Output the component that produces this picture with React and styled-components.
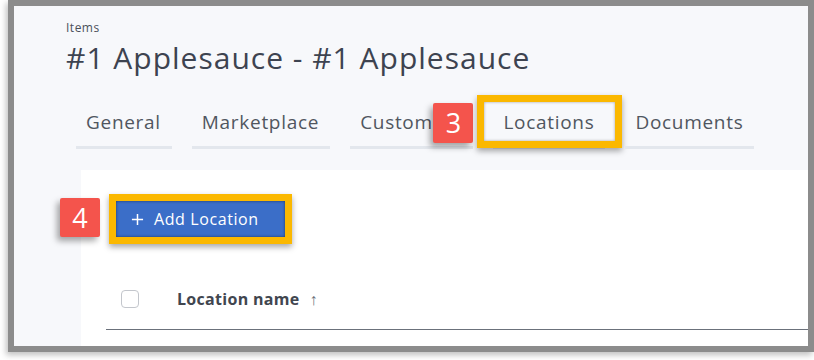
import React from "react";
import styled, {createGlobalStyle} from "styled-components";

const GlobalStyle = createGlobalStyle`
  html, body {
    margin: 0;
    padding: 0;
    background: #ffffff;
  }
  body {
    font-family: "Open Sans", "Liberation Sans", sans-serif;
  }
`;

const tabs = [
  {label: "General"},
  {label: "Marketplace"},
  {label: "Customers", badge: "3"},
  {label: "Locations", highlight: true},
  {label: "Documents"},
];

const App = () => {
  return <Page>
    <GlobalStyle/>
    <Frame>
      <Header>
        <Crumb>Items</Crumb>
        <Title>#1 Applesauce - #1 Applesauce</Title>
      </Header>
      <Tabs>
        {tabs.map(t => (
          <Tab key={t.label}>
            {t.label}
            {t.badge && <TabBadge>{t.badge}</TabBadge>}
            {t.highlight && <TabHighlight/>}
          </Tab>
        ))}
      </Tabs>
      <Card>
        <Toolbar>
          <StepBadge>4</StepBadge>
          <Highlight>
            <AddButton>
              <PlusIcon viewBox="0 0 14 14">
                <path d="M7 1v12M1 7h12" stroke="#fff" strokeWidth="1.6" fill="none"/>
              </PlusIcon>
              Add Location
            </AddButton>
          </Highlight>
        </Toolbar>
        <Table>
          <HeadRow>
            <Checkbox/>
            <HeadCell>Location name</HeadCell>
            <SortArrow>↑</SortArrow>
          </HeadRow>
        </Table>
      </Card>
    </Frame>
  </Page>
};

const Page = styled.div`
  width: 814px;
  height: 360px;
  overflow: hidden;
  background: #ffffff;
`;

const Frame = styled.div`
  margin-left: 8px;
  width: 806px;
  height: 352px;
  box-sizing: border-box;
  border: 6px solid #8c8c8c;
  background: #f7f8fb;
  box-shadow: -2px 3px 6px rgba(0, 0, 0, 0.25);
  overflow: hidden;
  display: flex;
  flex-direction: column;
`;

const Header = styled.div`
  padding: 14px 0 0 52px;
`;

const Crumb = styled.div`
  font-size: 12px;
  line-height: 16px;
  letter-spacing: 0.5px;
  color: #4a505a;
`;

const Title = styled.h1`
  margin: 3px 0 0 0;
  font-size: 30px;
  line-height: 38px;
  font-weight: 500;
  color: #3d4350;
  letter-spacing: 1px;
`;

const Tabs = styled.div`
  display: flex;
  gap: 20px;
  margin: 23px 0 0 62px;
`;

const Tab = styled.div`
  position: relative;
  padding: 9px 11px 11px 10px;
  font-size: 19px;
  line-height: 26px;
  letter-spacing: 0.7px;
  color: #50565f;
  border-bottom: 3px solid #e3e7ed;
  white-space: nowrap;
`;

const TabBadge = styled.div`
  position: absolute;
  right: 0;
  top: 3px;
  width: 40px;
  height: 40px;
  border-radius: 2px;
  background: #f4544c;
  color: #ffffff;
  font-size: 27px;
  line-height: 40px;
  letter-spacing: 0;
  text-align: center;
  box-shadow: -3px 4px 6px rgba(0, 0, 0, 0.35);
`;

const TabHighlight = styled.div`
  position: absolute;
  left: -16px;
  right: -17px;
  top: -5px;
  bottom: -2px;
  border: 7px solid #fbb800;
  box-shadow: 0 3px 6px rgba(0, 0, 0, 0.35), inset 0 0 3px rgba(0, 0, 0, 0.35);
`;

const Card = styled.div`
  flex: 1;
  margin: 21px 0 0 67px;
  background: #ffffff;
`;

const Toolbar = styled.div`
  position: relative;
  padding: 24px 0 0 28px;
`;

const StepBadge = styled.div`
  position: absolute;
  left: -21px;
  top: 28px;
  width: 40px;
  height: 39px;
  border-radius: 2px;
  background: #f4544c;
  color: #ffffff;
  font-size: 27px;
  line-height: 39px;
  text-align: center;
  box-shadow: -3px 4px 6px rgba(0, 0, 0, 0.35);
`;

const Highlight = styled.div`
  display: inline-block;
  border: 7px solid #fbb800;
  box-shadow: 0 3px 6px rgba(0, 0, 0, 0.35);
`;

const AddButton = styled.button`
  display: flex;
  align-items: center;
  gap: 10px;
  width: 169px;
  height: 36px;
  padding: 0 0 0 15px;
  border: none;
  background: #3b6ec8;
  color: #ffffff;
  font-family: "Open Sans", "Liberation Sans", sans-serif;
  font-size: 16px;
  letter-spacing: 0.6px;
  box-shadow: inset 0 0 3px rgba(0, 0, 0, 0.5);
`;

const PlusIcon = styled.svg`
  width: 13px;
  height: 13px;
`;

const Table = styled.div`
  margin: 35px 0 0 25px;
`;

const HeadRow = styled.div`
  display: flex;
  align-items: center;
  height: 40px;
  padding: 0 0 10px 15px;
  border-bottom: 1.5px solid #6b717b;
`;

const Checkbox = styled.div`
  width: 16px;
  height: 16px;
  border: 1px solid #c3c6cc;
  border-radius: 4px;
  margin-right: 38px;
`;

const HeadCell = styled.div`
  font-size: 16px;
  font-weight: 700;
  letter-spacing: 0.3px;
  color: #41464f;
`;

const SortArrow = styled.span`
  margin-left: 10px;
  font-size: 16px;
  color: #6b7079;
`;

export default App;
